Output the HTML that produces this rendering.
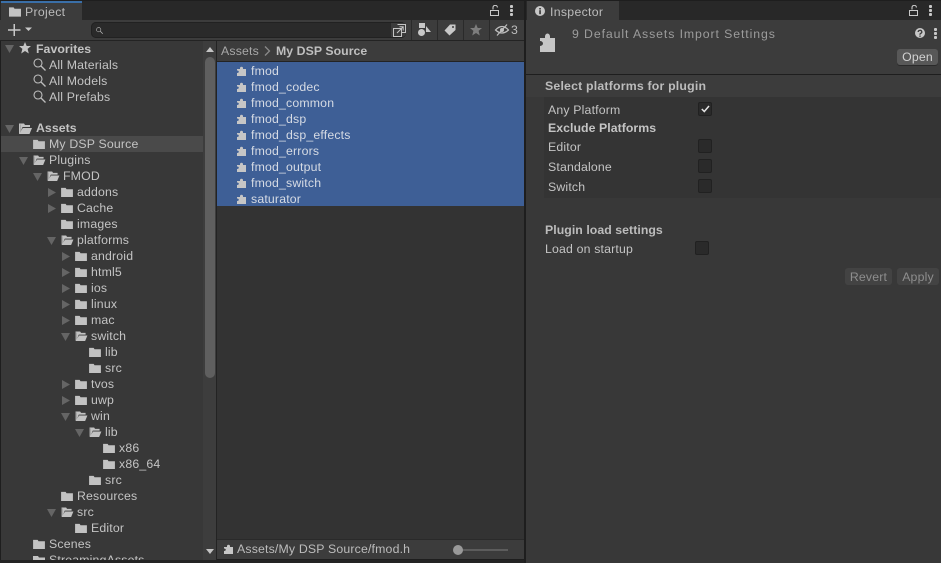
<!DOCTYPE html>
<html><head><meta charset="utf-8">
<style>
html,body{margin:0;padding:0;width:941px;height:563px;overflow:hidden;background:#1e1e1e}
body{position:relative;font-family:"Liberation Sans",sans-serif;font-size:12.3px;color:#c4c4c4;letter-spacing:.17px}
.b{position:absolute}
.t{position:absolute;white-space:nowrap;line-height:16px;height:16px}
.h{font-weight:bold;letter-spacing:.05px}
svg.i{position:absolute;overflow:visible}
.cb{position:absolute;width:12px;height:12px;background:#2a2a2a;border:1px solid #212121;border-radius:2px}
.btn{position:absolute;border-radius:3px;text-align:center;line-height:16px;height:16px}
</style></head><body>
<svg width="0" height="0" style="position:absolute">
<defs>
<symbol id="f" viewBox="0 0 13 11"><path d="M0 1h5l1 1.500h7V11H0z" fill="#c2c2c2"/></symbol>
<symbol id="o" viewBox="0 0 13 11"><path d="M0 0.500h5l1 1.500h5v2H3.500L1.200 9.500V1.500H1L0 1zM3.800 5H13l-2.500 6H0z" fill="#c2c2c2"/><path d="M0 .5h1v10H0z" fill="#c2c2c2"/></symbol>
<symbol id="s" viewBox="0 0 13 13"><circle cx="5" cy="5" r="4" fill="none" stroke="#bdbdbd" stroke-width="1.100"/><path d="M8 8l4.500 4.500" stroke="#bdbdbd" stroke-width="1.300"/></symbol>
<symbol id="p" viewBox="0 0 15 20" preserveAspectRatio="none"><path d="M0 6H5V4.500a2.500 3 0 1 1 5 0V6H15V20H0V14a3 2.500 0 0 0 0-5z" fill="#c6c6c6"/></symbol>
<symbol id="d" viewBox="0 0 9 8"><path d="M0 0h9L4.500 8z" fill="#656565"/></symbol>
<symbol id="r" viewBox="0 0 8 9"><path d="M0 0l8 4.500L0 9z" fill="#656565"/></symbol>
<symbol id="lock" viewBox="0 0 9 11"><path d="M1.500 4.500V2.500a2.200 2.200 0 0 1 4.400 0" fill="none" stroke="#c8c8c8" stroke-width="1.100" transform="translate(1.500 0)"/><rect x=".5" y="5.500" width="8" height="5" fill="none" stroke="#c8c8c8"/></symbol>
<symbol id="dots" viewBox="0 0 3 11"><rect width="3" height="3" y="0" rx="1" fill="#c8c8c8"/><rect width="3" height="3" y="4" rx="1" fill="#c8c8c8"/><rect width="3" height="3" y="8" rx="1" fill="#c8c8c8"/></symbol>
</defs></svg>

<!-- left panel -->
<div class="b" style="left:0;top:1px;width:525px;height:19px;background:#282828"></div>
<div class="b" style="left:1px;top:1px;width:81px;height:19px;background:#3c3c3c"></div>
<div class="b" style="left:1px;top:1px;width:81px;height:2px;background:#3a6fa8"></div>
<svg class="i" style="left:9px;top:6px" width="12" height="11"><use href="#f" width="12" height="11"/></svg>
<div class="t" style="left:25px;top:4px;color:#bcbcbc;letter-spacing:.3px">Project</div>
<svg class="i" style="left:490px;top:5px" width="9" height="11"><use href="#lock" width="9" height="11"/></svg>
<svg class="i" style="left:510px;top:5px" width="3" height="11"><use href="#dots" width="3" height="11"/></svg>

<div class="b" style="left:0;top:20px;width:525px;height:20px;background:#3c3c3c"></div>
<div class="b" style="left:0;top:40px;width:525px;height:1px;background:#232323"></div>
<svg class="i" style="left:8px;top:24px" width="25" height="12"><path d="M5.500 0h1.500v12H5.500zM0 5.200h12.500v1.500H0z" fill="#c8c8c8"/><path d="M17 3.500h7l-3.500 3.500z" fill="#c8c8c8"/></svg>
<div class="b" style="left:91px;top:22px;width:315px;height:16px;background:#2a2a2a;border-radius:5px;box-shadow:inset 0 0 0 1px #212121"></div>
<div class="b" style="left:391px;top:23px;width:15px;height:14px;background:#3c3c3c;border-radius:0 4px 4px 0"></div>
<svg class="i" style="left:96px;top:27px" width="7" height="7"><use href="#s" width="7" height="7"/></svg>
<svg class="i" style="left:393px;top:24px" width="13" height="13"><path d="M4.500 .5h8v8H9M.5 4.500h8v8h-8zM4 9l6-6M6.500 2.800H10.200V6.500" fill="none" stroke="#c4c4c4"/></svg>
<div class="b" style="left:411px;top:20px;width:1px;height:20px;background:#2a2a2a"></div>
<div class="b" style="left:437px;top:20px;width:1px;height:20px;background:#2a2a2a"></div>
<div class="b" style="left:463px;top:20px;width:1px;height:20px;background:#2a2a2a"></div>
<div class="b" style="left:489px;top:20px;width:1px;height:20px;background:#2a2a2a"></div>
<svg class="i" style="left:418px;top:23px" width="14" height="13"><rect x="1" y="0" width="6" height="5" fill="#c8c8c8"/><circle cx="3.500" cy="9.500" r="3.500" fill="#c8c8c8"/><path d="M8 3l5 6H8z" fill="#c8c8c8"/></svg>
<svg class="i" style="left:444px;top:24px" width="12" height="12"><path d="M6 .5h5.500V6L5.500 11.500.5 6.500z" fill="#c8c8c8"/><circle cx="9" cy="3" r="1" fill="#3c3c3c"/></svg>
<svg class="i" style="left:470px;top:24px" width="12" height="12"><path d="M6 0l1.700 4H12L8.600 6.900 9.800 11.500 6 9 2.200 11.500 3.400 6.900 0 4h4.300z" fill="#7d7d7d"/></svg>
<svg class="i" style="left:495px;top:24px" width="14" height="12"><path d="M.5 6Q7-1 13.500 6 7 12 .5 6z" fill="none" stroke="#c0c0c0" stroke-width="1.200"/><circle cx="7" cy="6" r="2" fill="#c0c0c0"/><path d="M2 11.500L12 .5" stroke="#c0c0c0" stroke-width="1.200"/></svg>
<div class="t" style="left:511px;top:22px;color:#bcbcbc;letter-spacing:0">3</div>

<!-- tree -->
<div class="b" style="left:1px;top:41px;width:202px;height:519px;background:#383838"></div>
<div class="b" style="left:1px;top:136px;width:202px;height:16px;background:#4a4a4a"></div>
<div class="b" style="left:203px;top:41px;width:13px;height:519px;background:#3d3d3d"></div>
<div class="b" style="left:205px;top:57px;width:10px;height:321px;background:#5f5f5f;border-radius:5px"></div>
<svg class="i" style="left:206px;top:47px" width="8" height="5"><path d="M0 5h8L4 0z" fill="#c4c4c4"/></svg>
<svg class="i" style="left:206px;top:549px" width="8" height="5"><path d="M0 0h8L4 5z" fill="#c4c4c4"/></svg>
<div class="b" style="left:216px;top:41px;width:1px;height:519px;background:#232323"></div>

<svg class="i" style="left:5px;top:45px" width="9" height="8"><use href="#d" width="9" height="8"/></svg>
<svg class="i" style="left:19px;top:42px" width="12" height="12"><path d="M6 0l1.700 4H12L8.600 6.900 9.800 11.500 6 9 2.200 11.500 3.400 6.900 0 4h4.300z" fill="#c4c4c4"/></svg>
<div class="t h" style="left:36px;top:41px">Favorites</div>
<svg class="i" style="left:33px;top:58px" width="13" height="13"><use href="#s" width="13" height="13"/></svg><div class="t" style="left:49px;top:57px">All Materials</div>
<svg class="i" style="left:33px;top:74px" width="13" height="13"><use href="#s" width="13" height="13"/></svg><div class="t" style="left:49px;top:73px">All Models</div>
<svg class="i" style="left:33px;top:90px" width="13" height="13"><use href="#s" width="13" height="13"/></svg><div class="t" style="left:49px;top:89px">All Prefabs</div>

<svg class="i" style="left:5px;top:125px" width="9" height="8"><use href="#d" width="9" height="8"/></svg>
<svg class="i" style="left:19px;top:123px" width="13" height="11"><use href="#o" width="13" height="11"/></svg>
<div class="t h" style="left:36px;top:120px">Assets</div>

<svg class="i" style="left:33px;top:139px" width="12" height="10"><use href="#f" width="12" height="10"/></svg><div class="t" style="left:49px;top:136px">My DSP Source</div>

<svg class="i" style="left:19px;top:157px" width="9" height="8"><use href="#d" width="9" height="8"/></svg>
<svg class="i" style="left:33px;top:155px" width="13" height="10"><use href="#o" width="13" height="10"/></svg><div class="t" style="left:49px;top:152px">Plugins</div>

<svg class="i" style="left:33px;top:173px" width="9" height="8"><use href="#d" width="9" height="8"/></svg>
<svg class="i" style="left:47px;top:171px" width="13" height="10"><use href="#o" width="13" height="10"/></svg><div class="t" style="left:63px;top:168px">FMOD</div>

<svg class="i" style="left:48px;top:188px" width="8" height="9"><use href="#r" width="8" height="9"/></svg>
<svg class="i" style="left:61px;top:187px" width="12" height="10"><use href="#f" width="12" height="10"/></svg><div class="t" style="left:77px;top:184px">addons</div>
<svg class="i" style="left:48px;top:204px" width="8" height="9"><use href="#r" width="8" height="9"/></svg>
<svg class="i" style="left:61px;top:203px" width="12" height="10"><use href="#f" width="12" height="10"/></svg><div class="t" style="left:77px;top:200px">Cache</div>
<svg class="i" style="left:61px;top:219px" width="12" height="10"><use href="#f" width="12" height="10"/></svg><div class="t" style="left:77px;top:216px">images</div>
<svg class="i" style="left:47px;top:237px" width="9" height="8"><use href="#d" width="9" height="8"/></svg>
<svg class="i" style="left:61px;top:235px" width="13" height="10"><use href="#o" width="13" height="10"/></svg><div class="t" style="left:77px;top:232px">platforms</div>

<svg class="i" style="left:62px;top:252px" width="8" height="9"><use href="#r" width="8" height="9"/></svg>
<svg class="i" style="left:75px;top:251px" width="12" height="10"><use href="#f" width="12" height="10"/></svg><div class="t" style="left:91px;top:248px">android</div>
<svg class="i" style="left:62px;top:268px" width="8" height="9"><use href="#r" width="8" height="9"/></svg>
<svg class="i" style="left:75px;top:267px" width="12" height="10"><use href="#f" width="12" height="10"/></svg><div class="t" style="left:91px;top:264px">html5</div>
<svg class="i" style="left:62px;top:284px" width="8" height="9"><use href="#r" width="8" height="9"/></svg>
<svg class="i" style="left:75px;top:283px" width="12" height="10"><use href="#f" width="12" height="10"/></svg><div class="t" style="left:91px;top:280px">ios</div>
<svg class="i" style="left:62px;top:300px" width="8" height="9"><use href="#r" width="8" height="9"/></svg>
<svg class="i" style="left:75px;top:299px" width="12" height="10"><use href="#f" width="12" height="10"/></svg><div class="t" style="left:91px;top:296px">linux</div>
<svg class="i" style="left:62px;top:316px" width="8" height="9"><use href="#r" width="8" height="9"/></svg>
<svg class="i" style="left:75px;top:315px" width="12" height="10"><use href="#f" width="12" height="10"/></svg><div class="t" style="left:91px;top:312px">mac</div>
<svg class="i" style="left:61px;top:333px" width="9" height="8"><use href="#d" width="9" height="8"/></svg>
<svg class="i" style="left:75px;top:331px" width="13" height="10"><use href="#o" width="13" height="10"/></svg><div class="t" style="left:91px;top:328px">switch</div>
<svg class="i" style="left:89px;top:347px" width="12" height="10"><use href="#f" width="12" height="10"/></svg><div class="t" style="left:105px;top:344px">lib</div>
<svg class="i" style="left:89px;top:363px" width="12" height="10"><use href="#f" width="12" height="10"/></svg><div class="t" style="left:105px;top:360px">src</div>
<svg class="i" style="left:62px;top:380px" width="8" height="9"><use href="#r" width="8" height="9"/></svg>
<svg class="i" style="left:75px;top:379px" width="12" height="10"><use href="#f" width="12" height="10"/></svg><div class="t" style="left:91px;top:376px">tvos</div>
<svg class="i" style="left:62px;top:396px" width="8" height="9"><use href="#r" width="8" height="9"/></svg>
<svg class="i" style="left:75px;top:395px" width="12" height="10"><use href="#f" width="12" height="10"/></svg><div class="t" style="left:91px;top:392px">uwp</div>
<svg class="i" style="left:61px;top:413px" width="9" height="8"><use href="#d" width="9" height="8"/></svg>
<svg class="i" style="left:75px;top:411px" width="13" height="10"><use href="#o" width="13" height="10"/></svg><div class="t" style="left:91px;top:408px">win</div>
<svg class="i" style="left:75px;top:429px" width="9" height="8"><use href="#d" width="9" height="8"/></svg>
<svg class="i" style="left:89px;top:427px" width="13" height="10"><use href="#o" width="13" height="10"/></svg><div class="t" style="left:105px;top:424px">lib</div>
<svg class="i" style="left:103px;top:443px" width="12" height="10"><use href="#f" width="12" height="10"/></svg><div class="t" style="left:119px;top:440px">x86</div>
<svg class="i" style="left:103px;top:459px" width="12" height="10"><use href="#f" width="12" height="10"/></svg><div class="t" style="left:119px;top:456px">x86_64</div>
<svg class="i" style="left:89px;top:475px" width="12" height="10"><use href="#f" width="12" height="10"/></svg><div class="t" style="left:105px;top:472px">src</div>
<svg class="i" style="left:61px;top:491px" width="12" height="10"><use href="#f" width="12" height="10"/></svg><div class="t" style="left:77px;top:488px">Resources</div>
<svg class="i" style="left:47px;top:509px" width="9" height="8"><use href="#d" width="9" height="8"/></svg>
<svg class="i" style="left:61px;top:507px" width="13" height="10"><use href="#o" width="13" height="10"/></svg><div class="t" style="left:77px;top:504px">src</div>
<svg class="i" style="left:75px;top:523px" width="12" height="10"><use href="#f" width="12" height="10"/></svg><div class="t" style="left:91px;top:520px">Editor</div>
<svg class="i" style="left:33px;top:539px" width="12" height="10"><use href="#f" width="12" height="10"/></svg><div class="t" style="left:49px;top:536px">Scenes</div>
<svg class="i" style="left:33px;top:555px" width="12" height="5" viewBox="0 0 12 5"><path d="M0 1h5l1 1.500h6V5H0z" fill="#c2c2c2"/></svg>
<div class="b" style="left:49px;top:552px;width:150px;height:8px;overflow:hidden"><div class="t" style="left:0;top:0">StreamingAssets</div></div>

<!-- right list -->
<div class="b" style="left:217px;top:41px;width:308px;height:20px;background:#3c3c3c"></div>
<div class="b" style="left:217px;top:61px;width:308px;height:1px;background:#232323"></div>
<div class="t" style="left:221px;top:43px;color:#a8a8a8">Assets</div>
<svg class="i" style="left:264px;top:46px" width="7" height="10"><path d="M1 .5l4.500 4.500L1 9.500" fill="none" stroke="#8a8a8a" stroke-width="1.300"/></svg>
<div class="t h" style="left:276px;top:43px;color:#bfbfbf">My DSP Source</div>
<div class="b" style="left:217px;top:62px;width:307px;height:478px;background:#333333"></div>
<div class="b" style="left:217px;top:62px;width:307px;height:144px;background:#3e5f96"></div>

<svg class="i" style="left:237px;top:66px" width="9" height="10"><use href="#p" width="9" height="10"/></svg><div class="t" style="left:251px;top:63px;color:#d6dbe4">fmod</div>
<svg class="i" style="left:237px;top:82px" width="9" height="10"><use href="#p" width="9" height="10"/></svg><div class="t" style="left:251px;top:79px;color:#d6dbe4">fmod_codec</div>
<svg class="i" style="left:237px;top:98px" width="9" height="10"><use href="#p" width="9" height="10"/></svg><div class="t" style="left:251px;top:95px;color:#d6dbe4">fmod_common</div>
<svg class="i" style="left:237px;top:114px" width="9" height="10"><use href="#p" width="9" height="10"/></svg><div class="t" style="left:251px;top:111px;color:#d6dbe4">fmod_dsp</div>
<svg class="i" style="left:237px;top:130px" width="9" height="10"><use href="#p" width="9" height="10"/></svg><div class="t" style="left:251px;top:127px;color:#d6dbe4">fmod_dsp_effects</div>
<svg class="i" style="left:237px;top:146px" width="9" height="10"><use href="#p" width="9" height="10"/></svg><div class="t" style="left:251px;top:143px;color:#d6dbe4">fmod_errors</div>
<svg class="i" style="left:237px;top:162px" width="9" height="10"><use href="#p" width="9" height="10"/></svg><div class="t" style="left:251px;top:159px;color:#d6dbe4">fmod_output</div>
<svg class="i" style="left:237px;top:178px" width="9" height="10"><use href="#p" width="9" height="10"/></svg><div class="t" style="left:251px;top:175px;color:#d6dbe4">fmod_switch</div>
<svg class="i" style="left:237px;top:194px" width="9" height="10"><use href="#p" width="9" height="10"/></svg><div class="t" style="left:251px;top:191px;color:#d6dbe4">saturator</div>

<div class="b" style="left:217px;top:540px;width:307px;height:19px;background:#3c3c3c;box-shadow:0 -1px 0 #2a2a2a"></div>
<svg class="i" style="left:224px;top:544px" width="9" height="10"><use href="#p" width="9" height="10"/></svg>
<div class="t" style="left:237px;top:541px;color:#bcbcbc">Assets/My DSP Source/fmod.h</div>
<div class="b" style="left:458px;top:549px;width:50px;height:2px;background:#5c5c5c"></div>
<div class="b" style="left:453px;top:545px;width:10px;height:10px;border-radius:50%;background:#999"></div>

<div class="b" style="left:0;top:560px;width:525px;height:3px;background:#232323"></div>
<div class="b" style="left:524px;top:0;width:2px;height:563px;background:#1e1e1e"></div>

<!-- inspector -->
<div class="b" style="left:526px;top:1px;width:415px;height:19px;background:#282828"></div>
<div class="b" style="left:527px;top:1px;width:92px;height:19px;background:#3c3c3c"></div>
<svg class="i" style="left:535px;top:6px" width="10" height="10"><circle cx="5" cy="5" r="5" fill="#c8c8c8"/><rect x="4.200" y="4.200" width="1.700" height="4" fill="#3c3c3c"/><rect x="4.200" y="2" width="1.700" height="1.500" fill="#3c3c3c"/></svg>
<div class="t" style="left:550px;top:4px;color:#bcbcbc;letter-spacing:.3px">Inspector</div>
<svg class="i" style="left:909px;top:5px" width="9" height="11"><use href="#lock" width="9" height="11"/></svg>
<svg class="i" style="left:929px;top:5px" width="3" height="11"><use href="#dots" width="3" height="11"/></svg>

<div class="b" style="left:526px;top:20px;width:415px;height:54px;background:#3c3c3c"></div>
<div class="b" style="left:526px;top:74px;width:415px;height:1px;background:#1e1e1e"></div>
<div class="b" style="left:526px;top:75px;width:415px;height:488px;background:#383838"></div>
<div class="b" style="left:526px;top:75px;width:415px;height:22px;background:#3c3c3c"></div>
<svg class="i" style="left:540px;top:32px" width="15" height="20"><use href="#p" width="15" height="20"/></svg>
<div class="t" style="left:572px;top:26px;color:#9c9c9c;letter-spacing:.9px">9 Default Assets Import Settings</div>
<svg class="i" style="left:915px;top:28px" width="10" height="10"><circle cx="5" cy="5" r="5" fill="#c8c8c8"/><path d="M3.200 4a1.800 1.600 0 1 1 2.500 1.400L5 6v.8" fill="none" stroke="#3c3c3c" stroke-width="1.300"/><rect x="4.300" y="7.500" width="1.400" height="1.300" fill="#3c3c3c"/></svg>
<svg class="i" style="left:934px;top:28px" width="3" height="11"><use href="#dots" width="3" height="11"/></svg>
<div class="btn" style="left:897px;top:49px;width:41px;background:#585858;color:#d2d2d2;box-shadow:0 1px 0 #2a2a2a">Open</div>

<div class="t h" style="left:545px;top:78px;color:#bcbcbc;letter-spacing:.2px">Select platforms for plugin</div>
<div class="b" style="left:544px;top:97px;width:397px;height:101px;background:#343434"></div>
<div class="t" style="left:548px;top:102px">Any Platform</div>
<div class="cb" style="left:698px;top:102px"></div>
<svg class="i" style="left:701px;top:105px" width="9" height="8"><path d="M.8 4l2.500 2.500L8 1" fill="none" stroke="#e4e4e4" stroke-width="1.500"/></svg>
<div class="t h" style="left:548px;top:120px">Exclude Platforms</div>
<div class="t" style="left:548px;top:139px">Editor</div><div class="cb" style="left:698px;top:139px"></div>
<div class="t" style="left:548px;top:159px">Standalone</div><div class="cb" style="left:698px;top:159px"></div>
<div class="t" style="left:548px;top:179px">Switch</div><div class="cb" style="left:698px;top:179px"></div>

<div class="t h" style="left:545px;top:222px;color:#bcbcbc">Plugin load settings</div>
<div class="t" style="left:545px;top:241px">Load on startup</div><div class="cb" style="left:695px;top:241px"></div>

<div class="btn" style="left:845px;top:268px;width:47px;height:17px;line-height:18px;background:#434343;color:#8e8e8e">Revert</div>
<div class="btn" style="left:897px;top:268px;width:42px;height:17px;line-height:18px;background:#434343;color:#8e8e8e">Apply</div>
</body></html>
